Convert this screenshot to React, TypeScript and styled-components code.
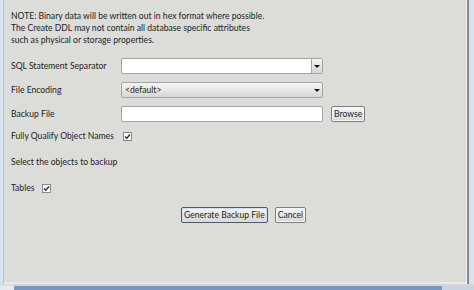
import React from "react";
import styled, { createGlobalStyle } from "styled-components";

const GlobalStyle = createGlobalStyle`
	html, body {
		margin: 0;
		padding: 0;
		background: #dcdcda;
	}
	body {
		font-family: Lato, "Open Sans", sans-serif;
		font-size: 8.6px;
		color: #232323;
	}
`;

const Window = styled.div`
	width: 474px;
	height: 290px;
	display: flex;
	flex-direction: column;
	overflow: hidden;
`;

const Body = styled.div`
	flex: 1;
	display: flex;
	flex-direction: row;
	min-height: 0;
`;

const LeftEdge = styled.div`
	width: 3px;
	background: #d9e3ef;
	border-right: 1px solid #b9c3cf;
`;

const RightEdge = styled.div`
	width: 5px;
	background: #d8e3f1;
	border-left: 2px solid #8a8a8a;
	box-shadow: -1px 0 0 #f0f0ee;
`;

const Content = styled.div`
	flex: 1;
	background: #dcdcda;
	padding: 10px 0 0 7px;
	display: flex;
	flex-direction: column;
	border-bottom: 2px solid #ebe9e1;
	white-space: nowrap;
`;

const Note = styled.p`
	margin: 0;
	line-height: 12px;
	white-space: pre-line;
`;

const Form = styled.div`
	margin-top: 12px;
	display: grid;
	grid-template-columns: 110px 202px auto;
	row-gap: 8px;
	align-items: center;
`;

const Label = styled.span`
	line-height: 16px;
`;

const Field = styled.div<{ shaded?: boolean }>`
	height: 16px;
	box-sizing: border-box;
	border: 1px solid #a3a5a9;
	border-radius: 2px;
	background: ${({ shaded }) =>
		shaded ? "linear-gradient(#f4f4f4, #e6e6e6 50%, #d6d6d6)" : "#ffffff"};
	display: flex;
	align-items: center;
	padding-left: 3px;
`;

const FieldText = styled.span`
	flex: 1;
`;

const DropButton = styled.div<{ boxed?: boolean }>`
	width: 10px;
	height: 100%;
	display: flex;
	align-items: center;
	justify-content: center;
	${({ boxed }) =>
		boxed &&
		"border-left: 1px solid #a3a5a9; background: linear-gradient(#f4f4f4, #d6d6d6);"}
`;

const Arrow = styled.div`
	width: 0;
	height: 0;
	border-left: 3px solid transparent;
	border-right: 3px solid transparent;
	border-top: 3px solid #111;
`;

const Button = styled.button<{ primary?: boolean }>`
	font: inherit;
	color: #232323;
	height: 16px;
	padding: 0 2px;
	box-sizing: border-box;
	border: 1px solid ${({ primary }) => (primary ? "#4a5a6c" : "#7d7d7d")};
	border-radius: 2px;
	background: linear-gradient(#f6f6f6, #e8e8e8 50%, #d7d7d7);
	box-shadow: ${({ primary }) =>
		primary ? "inset 0 0 0 1px #cfe0f0" : "inset 0 0 0 1px #f8f8f8"};
	line-height: 12px;
`;

const BrowseCell = styled.div`
	padding-left: 8px;
`;

const CheckRow = styled.div`
	display: flex;
	align-items: center;
	gap: 8px;
`;

const CheckLabel = styled.span<{ width?: number }>`
	${({ width }) => width && `width: ${width}px;`}
`;

const Box = styled.div`
	width: 9px;
	height: 9px;
	box-sizing: border-box;
	border: 1px solid #8a8a8a;
	background: #fff;
	display: flex;
	align-items: center;
	justify-content: center;
`;

const Section = styled.div<{ top: number }>`
	margin-top: ${({ top }) => top}px;
	line-height: 16px;
`;

const Actions = styled.div`
	margin-top: 11px;
	display: flex;
	gap: 7px;
	padding-left: 170px;
`;

const Footer = styled.div`
	height: 6px;
	display: flex;
	flex-direction: column;
`;

const Sill = styled.div`
	height: 2px;
	background: #d6d6d4;
	margin-left: 14px;
`;

const Rail = styled.div`
	flex: 1;
	display: flex;
`;

const RailCorner = styled.div`
	width: 14px;
	background: #e6e9ee;
`;

const RailBlue = styled.div`
	flex: 1;
	background: #7a96c4;
`;

const RailEnd = styled.div`
	width: 32px;
	background: #c9d4e3;
`;

const Check = () => (
	<Box>
		<svg width="7" height="7" viewBox="0 0 7 7">
			<path d="M1 3.5 L2.8 5.3 L6 1.5" fill="none" stroke="#2a2a2a" strokeWidth="1.4" />
		</svg>
	</Box>
);

const App: React.FC = () => (
	<Window>
		<GlobalStyle />
		<Body>
			<LeftEdge />
			<Content>
				<Note>
					{"NOTE: Binary data will be written out in hex format where possible.\nThe Create DDL may not contain all database specific attributes\nsuch as physical or storage properties."}
				</Note>
				<Form>
					<Label>SQL Statement Separator</Label>
					<Field>
						<FieldText />
						<DropButton boxed>
							<Arrow />
						</DropButton>
					</Field>
					<span />
					<Label>File Encoding</Label>
					<Field shaded>
						<FieldText>&lt;default&gt;</FieldText>
						<DropButton>
							<Arrow />
						</DropButton>
					</Field>
					<span />
					<Label>Backup File</Label>
					<Field />
					<BrowseCell>
						<Button>Browse</Button>
					</BrowseCell>
				</Form>
				<Section top={6}>
					<CheckRow>
						<CheckLabel width={104}>Fully Qualify Object Names</CheckLabel>
						<Check />
					</CheckRow>
				</Section>
				<Section top={10}>Select the objects to backup</Section>
				<Section top={10}>
					<CheckRow>
						<CheckLabel>Tables</CheckLabel>
						<Check />
					</CheckRow>
				</Section>
				<Actions>
					<Button primary>Generate Backup File</Button>
					<Button>Cancel</Button>
				</Actions>
			</Content>
			<RightEdge />
		</Body>
		<Footer>
			<Sill />
			<Rail>
				<RailCorner />
				<RailBlue />
				<RailEnd />
			</Rail>
		</Footer>
	</Window>
);

export default App;
